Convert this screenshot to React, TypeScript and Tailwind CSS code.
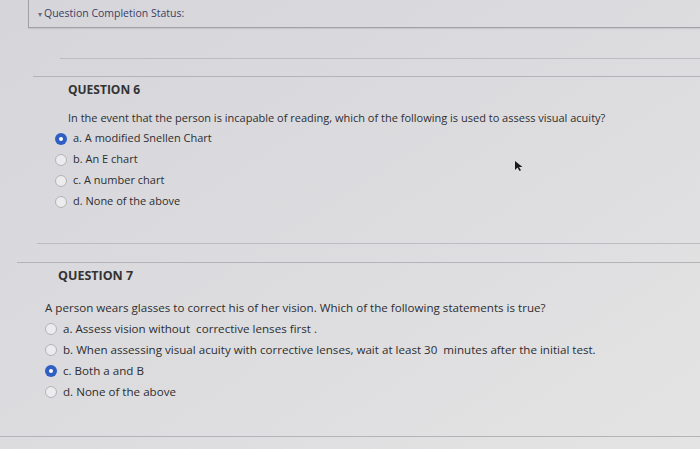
import React from 'react'

type Opt = { label: string; selected?: boolean }

const q6: Opt[] = [
  { label: 'a. A modified Snellen Chart', selected: true },
  { label: 'b. An E chart' },
  { label: 'c. A number chart' },
  { label: 'd. None of the above' },
]

const q7: Opt[] = [
  { label: 'a. Assess vision without  corrective lenses first .' },
  { label: 'b. When assessing visual acuity with corrective lenses, wait at least 30  minutes after the initial test.' },
  { label: 'c. Both a and B', selected: true },
  { label: 'd. None of the above' },
]

function Radio({ selected }: { selected?: boolean }) {
  if (selected) {
    return (
      <span className="w-[12px] h-[12px] rounded-full bg-[#2f5fc4] flex items-center justify-center shrink-0">
        <span className="w-[4px] h-[4px] rounded-full bg-white" />
      </span>
    )
  }
  return <span className="w-[12px] h-[12px] rounded-full border border-[#b4b4b8] bg-[#ececee] shrink-0" />
}

function Option({ opt }: { opt: Opt }) {
  return (
    <div className="flex items-center gap-[6px] h-[21px] whitespace-pre">
      <Radio selected={opt.selected} />
      <span>{opt.label}</span>
    </div>
  )
}

export default function App() {
  return (
    <div
      className="w-[700px] h-[449px] overflow-hidden relative bg-linear-to-br from-[#d6d5da] via-[#dcdcdf] to-[#e4e4e4] text-[#2e2e30] text-[11px]"
      style={{ fontFamily: '"Open Sans", "Noto Sans", Arial, sans-serif' }}
    >
      {/* Completion status box */}
      <div className="ml-[28px] h-[28px] border-l border-b border-[#a2a2a6] flex items-center pl-[9px] shadow-[0_1px_1px_rgba(0,0,0,0.08)]">
        <span className="text-[8px] text-[#6a6f8a] mr-[2px]">▾</span>
        <span className="text-[#3a3f66] text-[10.5px]">Question Completion Status:</span>
      </div>

      <div className="mt-[30px] ml-[60px] h-px bg-[#bdbcc2]" />
      <div className="mt-[17px] ml-[33px] h-px bg-[#b3b3b8]" />

      {/* Question 6 */}
      <div className="pl-[68px]">
        <div className="mt-[5px] h-[16px] flex items-center font-bold text-[12px] text-[#333]">QUESTION 6</div>
        <div className="mt-[12px] h-[16px] flex items-center">
          In the event that the person is incapable of reading, which of the following is used to assess visual acuity?
        </div>
      </div>
      <div className="pl-[55px] mt-[2px] flex flex-col">
        {q6.map((o) => (
          <Option key={o.label} opt={o} />
        ))}
      </div>

      <div className="mt-[31px] ml-[37px] h-px bg-[#bdbcc2]" />
      <div className="mt-[18px] ml-[17px] h-px bg-[#b3b3b8]" />

      {/* Question 7 */}
      <div className="text-[11.6px]">
        <div className="pl-[58px]">
          <div className="mt-[5px] h-[16px] flex items-center font-bold text-[12.5px] text-[#333]">QUESTION 7</div>
        </div>
        <div className="pl-[45px]">
          <div className="mt-[16px] h-[16px] flex items-center">
            A person wears glasses to correct his of her vision. Which of the following statements is true?
          </div>
        </div>
        <div className="pl-[45px] mt-[2px] flex flex-col">
          {q7.map((o) => (
            <Option key={o.label} opt={o} />
          ))}
        </div>
      </div>

      <div className="mt-[34px] h-px bg-[#b3b3b8]" />

      {/* mouse cursor */}
      <svg className="absolute left-[514px] top-[160px]" width="10" height="12" viewBox="0 0 10 12">
        <path d="M1 1 L1 10 L3.5 7.5 L5.5 11 L7 10.3 L5 7 L8.5 7 Z" fill="#1a1a1c" />
      </svg>
    </div>
  )
}
